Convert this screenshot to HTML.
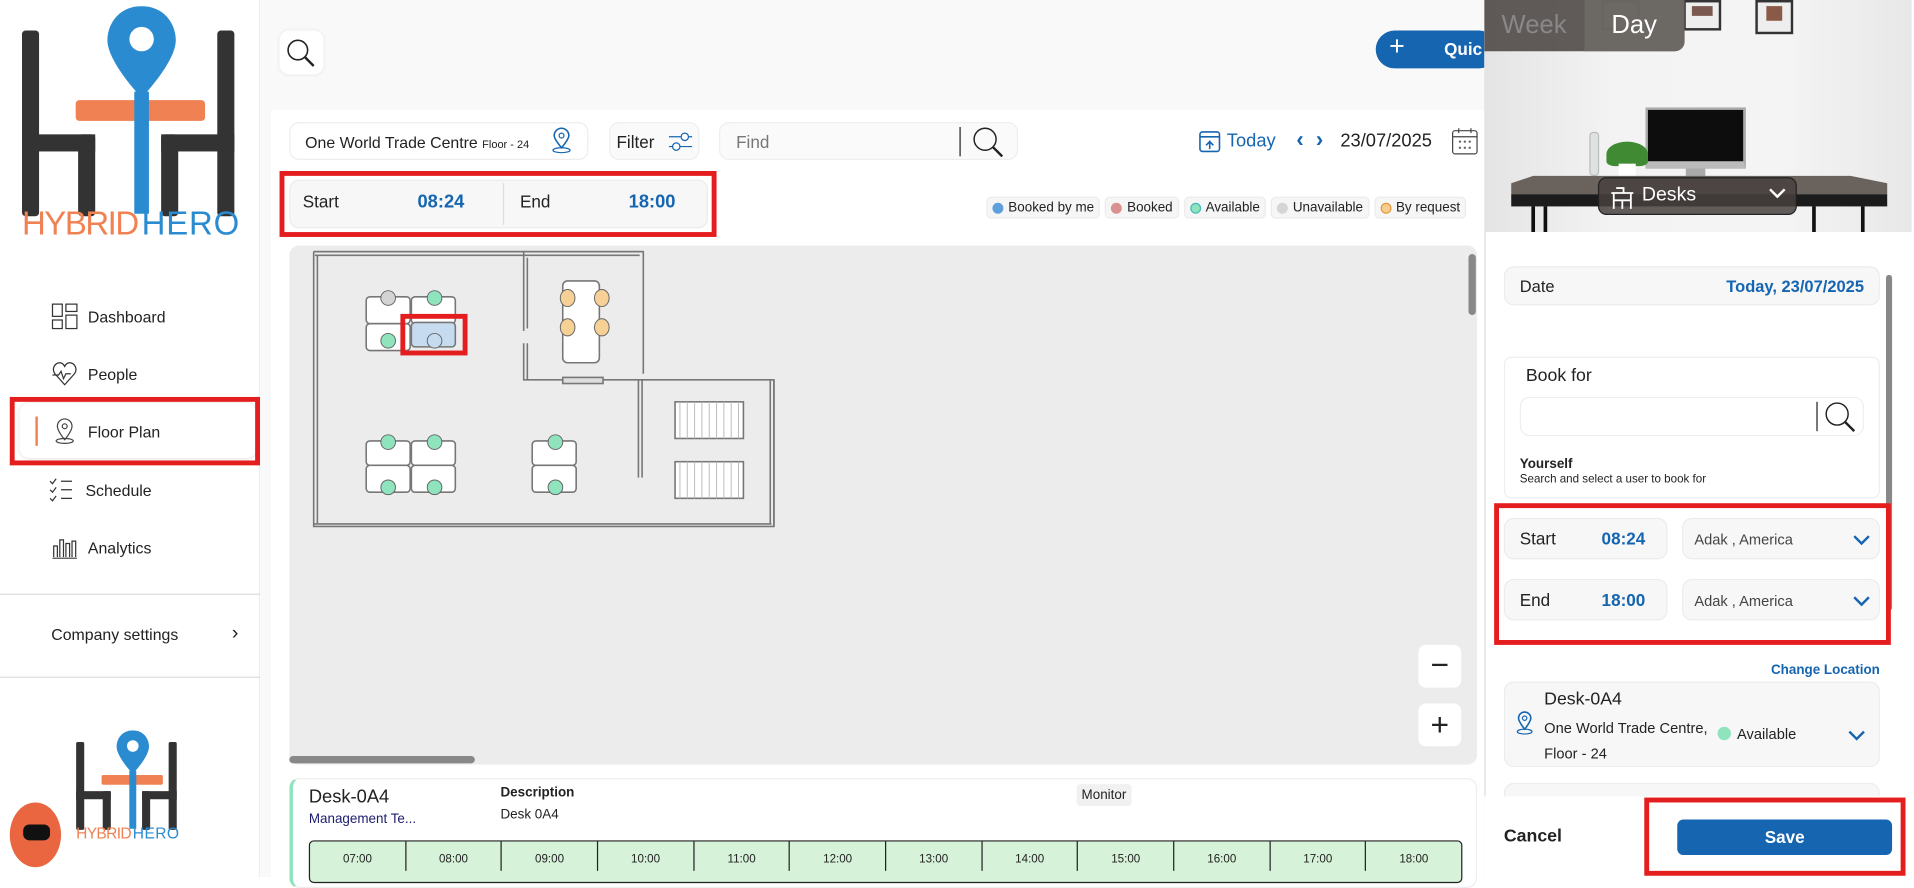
<!DOCTYPE html>
<html><head><meta charset="utf-8"><style>
*{box-sizing:border-box;margin:0;padding:0}
body{width:1914px;height:877px;overflow:hidden;background:#fff;font-family:"Liberation Sans",sans-serif;color:#222}
#w{position:absolute;left:0;top:0;width:1568px;height:718px;transform:scale(1.2207,1.2214);transform-origin:0 0;background:#f9f9f9}
.a{position:absolute}
.red{position:absolute;border:4px solid #e41e1e}
.nav{position:absolute;left:42px;font-size:13px;color:#222;display:flex;align-items:center;gap:8px}
.card{position:absolute;background:#f7f7f7;border:1px solid #ececec;border-radius:8px}
.blue{color:#1565b0;font-weight:bold}
.chip{display:inline-flex;align-items:center;gap:4px;background:#f6f6f6;border:1px solid #ececec;border-radius:4px;padding:2px 4px;font-size:11px;margin-left:4px}
.dot{width:9px;height:9px;border-radius:50%;display:inline-block}
</style></head><body><div id="w">
<!-- sidebar -->
<div class="a" style="left:0;top:0;width:213px;height:718px;background:#fff;border-right:1px solid #eee"></div>
<svg class="a" style="left:18px;top:5px" width="180" height="190" viewBox="0 0 180 190">
<rect x="0" y="20" width="14" height="152" rx="3" fill="#333"/><rect x="0" y="105" width="60" height="14" fill="#333"/><rect x="46" y="105" width="14" height="67" rx="3" fill="#333"/>
<rect x="160" y="20" width="14" height="152" rx="3" fill="#333"/><rect x="114" y="105" width="60" height="14" fill="#333"/><rect x="114" y="105" width="14" height="67" rx="3" fill="#333"/>
<rect x="44" y="77" width="106" height="17" rx="3" fill="#ef8153"/>
<rect x="92" y="70" width="12" height="100" fill="#2b8bd0"/>
<path d="M98 0C80 0 70 14 70 28C70 46 98 75 98 75C98 75 126 46 126 28C126 14 116 0 98 0Z" fill="#2b8bd0"/><circle cx="98" cy="27" r="10" fill="#fff"/>
<text x="0" y="187" font-size="27" font-family="Liberation Sans" fill="#ef8153" textLength="96">HYBRID</text><text x="98" y="187" font-size="27" fill="#2b8bd0" textLength="80">HERO</text>
</svg>
<div class="nav" style="top:248px"><svg width="22" height="22"><rect x="1" y="1" width="8" height="10" fill="none" stroke="#333"/><rect x="12" y="1" width="9" height="6" fill="none" stroke="#333"/><rect x="1" y="14" width="8" height="7" fill="none" stroke="#333"/><rect x="12" y="10" width="9" height="11" fill="none" stroke="#333"/></svg>Dashboard</div>
<div class="nav" style="top:295px"><svg width="22" height="22"><path d="M11 20L3 11C0 7 3 2 7 2C9 2 10 3 11 5C12 3 13 2 15 2C19 2 22 7 19 11Z M1 12H6L8 9L10 15L12 11H16" fill="none" stroke="#333"/></svg>People</div>
<div class="a" style="left:16px;top:330px;width:194px;height:45px;background:#fff;border-radius:8px;box-shadow:0 0 3px #ddd"></div>
<div class="a" style="left:29px;top:341px;width:2px;height:24px;background:#ef8153"></div>
<div class="nav" style="top:342px"><svg width="22" height="22"><path d="M11 18C11 18 5 11 5 7A6 6 0 0 1 17 7C17 11 11 18 11 18Z" fill="none" stroke="#444"/><circle cx="11" cy="7" r="2" fill="none" stroke="#444"/><ellipse cx="11" cy="19" rx="7" ry="2" fill="none" stroke="#444"/></svg>Floor Plan</div>
<div class="red" style="left:8px;top:325px;width:205px;height:56px"></div>
<div class="nav" style="top:390px;left:40px"><svg width="22" height="22"><path d="M1 4l2 2 3-4M1 11l2 2 3-4M1 18l2 2 3-4M10 4h9M10 11h9M10 18h9" fill="none" stroke="#333"/></svg>Schedule</div>
<div class="nav" style="top:437px"><svg width="22" height="22"><path d="M1 20H21M2 19V10H5V19M7 19V5H10V19M12 19V8H15V19M17 19V6H20V19" fill="none" stroke="#333"/></svg>Analytics</div>
<div class="a" style="left:0;top:486px;width:213px;height:1px;background:#ddd"></div>
<div class="a" style="left:42px;top:512px;font-size:13px">Company settings</div>
<div class="a" style="left:190px;top:510px;font-size:16px">›</div>
<div class="a" style="left:0;top:554px;width:213px;height:1px;background:#ddd"></div>
<svg class="a" style="left:60px;top:598px" width="90" height="90" viewBox="0 0 180 190">
<rect x="0" y="20" width="14" height="152" rx="3" fill="#333"/><rect x="0" y="105" width="60" height="14" fill="#333"/><rect x="46" y="105" width="14" height="67" rx="3" fill="#333"/>
<rect x="160" y="20" width="14" height="152" rx="3" fill="#333"/><rect x="114" y="105" width="60" height="14" fill="#333"/><rect x="114" y="105" width="14" height="67" rx="3" fill="#333"/>
<rect x="44" y="77" width="106" height="17" rx="3" fill="#ef8153"/><rect x="92" y="70" width="12" height="100" fill="#2b8bd0"/>
<path d="M98 0C80 0 70 14 70 28C70 46 98 75 98 75C98 75 126 46 126 28C126 14 116 0 98 0Z" fill="#2b8bd0"/><circle cx="98" cy="27" r="10" fill="#fff"/>
<text x="0" y="187" font-size="27" fill="#ef8153" textLength="96">HYBRID</text><text x="98" y="187" font-size="27" fill="#2b8bd0" textLength="80">HERO</text></svg>
<div class="a" style="left:8px;top:657px;width:42px;height:53px;border-radius:50%;background:#e96640"></div>
<div class="a" style="left:19px;top:675px;width:22px;height:13px;border-radius:5px;background:#111"></div>
<!-- top -->
<div class="a" style="left:229px;top:25px;width:36px;height:36px;background:#fff;border-radius:8px;box-shadow:0 0 3px #e4e4e4"></div>
<svg class="a" style="left:234px;top:31px" width="26" height="26"><circle cx="10" cy="10" r="8" fill="none" stroke="#222" stroke-width="1.3"/><path d="M16 16L23 23" stroke="#222" stroke-width="2"/></svg>
<div class="a" style="left:1127px;top:25px;width:100px;height:31px;border-radius:16px;background:#1565b0;color:#fff;font-weight:bold;font-size:14px;padding:7px 0 0 56px">Quic</div>
<div class="a" style="left:1138px;top:25px;color:#fff;font-size:22px">+</div>
<div class="a" style="left:222px;top:90px;width:994px;height:628px;background:#fff"></div>
<div class="a" style="left:237px;top:100px;width:245px;height:31px;border:1px solid #eee;border-radius:8px;font-size:13px;padding:8px 12px;background:#fff">One World Trade Centre <span style="font-size:9px">Floor - 24</span></div>
<svg class="a" style="left:450px;top:104px" width="20" height="22"><path d="M10 17C10 17 4 10 4 7A6 6 0 0 1 16 7C16 10 10 17 10 17Z" fill="none" stroke="#1565b0" stroke-width="1.3"/><circle cx="10" cy="7" r="2" fill="none" stroke="#1565b0"/><ellipse cx="10" cy="19" rx="7" ry="2" fill="none" stroke="#1565b0"/></svg>
<div class="a" style="left:499px;top:100px;width:74px;height:31px;border:1px solid #eee;border-radius:8px;background:#fafafa;font-size:14px;padding:7px 5px">Filter</div>
<svg class="a" style="left:547px;top:106px" width="22" height="20"><path d="M1 6H20M1 14H20" stroke="#1565b0"/><circle cx="14" cy="6" r="3" fill="#fff" stroke="#1565b0"/><circle cx="7" cy="14" r="3" fill="#fff" stroke="#1565b0"/></svg>
<div class="a" style="left:589px;top:100px;width:245px;height:31px;border:1px solid #eee;border-radius:8px;background:#fafafa;font-size:14px;color:#777;padding:7px 13px">Find</div>
<div class="a" style="left:786px;top:104px;width:1px;height:24px;background:#222"></div>
<svg class="a" style="left:795px;top:102px" width="30" height="28"><circle cx="12" cy="12" r="9" fill="none" stroke="#222" stroke-width="1.2"/><path d="M18 18L26 26" stroke="#222" stroke-width="2"/></svg>
<svg class="a" style="left:982px;top:106px" width="18" height="20"><rect x="1" y="2" width="16" height="16" rx="2" fill="none" stroke="#1565b0" stroke-width="1.3"/><path d="M1 6H17M9 9V16M6 13L9 10L12 13" fill="none" stroke="#1565b0" stroke-width="1.3"/></svg>
<div class="a blue" style="left:1005px;top:107px;font-size:15px;font-weight:normal;color:#1565b0">Today</div>
<div class="a" style="left:1062px;top:104px;color:#1565b0;font-size:18px;font-weight:bold">‹&nbsp;&nbsp;›</div>
<div class="a" style="left:1098px;top:107px;font-size:15px">23/07/2025</div>
<svg class="a" style="left:1189px;top:104px" width="22" height="24"><rect x="1" y="3" width="20" height="19" rx="2" fill="none" stroke="#444"/><path d="M1 8H21M6 1V5M16 1V5" stroke="#444"/><g fill="#666"><circle cx="7" cy="12" r="1"/><circle cx="11" cy="12" r="1"/><circle cx="15" cy="12" r="1"/><circle cx="7" cy="17" r="1"/><circle cx="11" cy="17" r="1"/><circle cx="15" cy="17" r="1"/></g></svg>
<div class="card" style="left:237px;top:147px;width:343px;height:40px"></div>
<div class="a" style="left:412px;top:150px;width:1px;height:34px;background:#ddd"></div>
<div class="a" style="left:248px;top:157px;font-size:14px">Start</div><div class="a blue" style="left:342px;top:157px;font-size:15px">08:24</div>
<div class="a" style="left:426px;top:157px;font-size:14px">End</div><div class="a blue" style="left:515px;top:157px;font-size:15px">18:00</div>
<div class="red" style="left:229px;top:140px;width:358px;height:54px"></div>
<div class="a" style="left:804px;top:161px;display:flex">
<span class="chip"><span class="dot" style="background:#5e9fdc"></span>Booked by me</span><span class="chip"><span class="dot" style="background:#d99090"></span>Booked</span><span class="chip"><span class="dot" style="background:#8fe3bd;border:1px solid #4bb"></span>Available</span><span class="chip"><span class="dot" style="background:#d5d5d5"></span>Unavailable</span><span class="chip"><span class="dot" style="background:#f7cd8f;border:1px solid #e79a3a"></span>By request</span></div>
<!-- map -->
<div class="a" style="left:237px;top:201px;width:973px;height:425px;background:#ececec;border-radius:8px"></div>
<div class="a" style="left:1203px;top:208px;width:6px;height:50px;background:#888;border-radius:3px"></div>
<div class="a" style="left:237px;top:619px;width:152px;height:6px;background:#888;border-radius:3px"></div>
<svg class="a" style="left:237px;top:201px" width="973" height="425" fill="none" stroke="#777" stroke-width="1.3">
<path d="M20 5H290V105M192 5V70M192 80V110H290M20 5V230H397V110H287M286 110V190M289 110V190M192 10V68M195 10V68M192 80V110M195 80V110"/>
<path d="M20 5H290M21 8H287M20 228H395M20 5V230M23 8V228M394 110V228M397 110V230"/>
<rect x="224" y="108" width="33" height="5" fill="#ddd"/>
<rect x="316" y="128" width="56" height="30" fill="#fff"/><path d="M320 128V158M326 128V158M332 128V158M338 128V158M344 128V158M350 128V158M356 128V158M362 128V158M368 128V158" stroke="#bbb" stroke-width="0.8"/>
<rect x="316" y="177" width="56" height="30" fill="#fff"/><path d="M320 177V207M326 177V207M332 177V207M338 177V207M344 177V207M350 177V207M356 177V207M362 177V207M368 177V207" stroke="#bbb" stroke-width="0.8"/>
<g fill="#fff"><rect x="63" y="42" width="36" height="22" rx="3"/><rect x="63" y="64" width="36" height="22" rx="3"/><rect x="100" y="42" width="36" height="22" rx="3"/><rect x="100" y="63" width="36" height="20" rx="3" fill="#c6dbf0"/>
<rect x="63" y="160" width="36" height="20" rx="3"/><rect x="63" y="180" width="36" height="22" rx="3"/><rect x="100" y="160" width="36" height="20" rx="3"/><rect x="100" y="180" width="36" height="22" rx="3"/><rect x="199" y="160" width="36" height="20" rx="3"/><rect x="199" y="180" width="36" height="22" rx="3"/>
<rect x="224" y="29" width="30" height="67" rx="4"/></g>
<g stroke="#666" stroke-width="0.8"><circle cx="81" cy="43" r="6" fill="#d3d3d3"/><circle cx="119" cy="43" r="6" fill="#8fe3bd"/><circle cx="81" cy="78" r="6" fill="#8fe3bd"/><circle cx="119" cy="78" r="6" fill="#c6dbf0"/>
<circle cx="81" cy="161" r="6" fill="#8fe3bd"/><circle cx="119" cy="161" r="6" fill="#8fe3bd"/><circle cx="218" cy="161" r="6" fill="#8fe3bd"/><circle cx="81" cy="198" r="6" fill="#8fe3bd"/><circle cx="119" cy="198" r="6" fill="#8fe3bd"/><circle cx="218" cy="198" r="6" fill="#8fe3bd"/>
<ellipse cx="228" cy="43" rx="6" ry="7" fill="#f6d094"/><ellipse cx="256" cy="43" rx="6" ry="7" fill="#f6d094"/><ellipse cx="228" cy="67" rx="6" ry="7" fill="#f6d094"/><ellipse cx="256" cy="67" rx="6" ry="7" fill="#f6d094"/></g>
<rect x="93" y="58" width="51" height="30" stroke="#e41e1e" stroke-width="4"/>
</svg>
<div class="a" style="left:1162px;top:528px;width:35px;height:35px;background:#fff;border-radius:6px;font-size:26px;text-align:center;line-height:32px">−</div>
<div class="a" style="left:1162px;top:576px;width:35px;height:35px;background:#fff;border-radius:6px;font-size:26px;text-align:center;line-height:34px">+</div>
<!-- desk card -->
<div class="a" style="left:237px;top:637px;width:973px;height:90px;background:#fff;border:1px solid #eee;border-left:3px solid #8fe3bd;border-radius:8px"></div>
<div class="a" style="left:253px;top:644px;font-size:15px">Desk-0A4</div>
<div class="a" style="left:253px;top:665px;font-size:11px;color:#1c1c6e">Management Te...</div>
<div class="a" style="left:410px;top:643px;font-size:11px;font-weight:bold">Description</div>
<div class="a" style="left:410px;top:661px;font-size:11px">Desk 0A4</div>
<div class="a" style="left:882px;top:642px;font-size:11px;background:#f1f1f1;padding:3px 4px;border-radius:3px">Monitor</div>
<div class="a" style="left:253px;top:688px;width:945px;height:35px;background:#d6f2d9;border:1px solid #222;border-radius:4px;display:flex;font-size:9.5px">
<div style="flex:1;text-align:center;padding-top:9px;border-right:1px solid #222;height:24px">07:00</div><div style="flex:1;text-align:center;padding-top:9px;border-right:1px solid #222;height:24px">08:00</div><div style="flex:1;text-align:center;padding-top:9px;border-right:1px solid #222;height:24px">09:00</div><div style="flex:1;text-align:center;padding-top:9px;border-right:1px solid #222;height:24px">10:00</div><div style="flex:1;text-align:center;padding-top:9px;border-right:1px solid #222;height:24px">11:00</div><div style="flex:1;text-align:center;padding-top:9px;border-right:1px solid #222;height:24px">12:00</div><div style="flex:1;text-align:center;padding-top:9px;border-right:1px solid #222;height:24px">13:00</div><div style="flex:1;text-align:center;padding-top:9px;border-right:1px solid #222;height:24px">14:00</div><div style="flex:1;text-align:center;padding-top:9px;border-right:1px solid #222;height:24px">15:00</div><div style="flex:1;text-align:center;padding-top:9px;border-right:1px solid #222;height:24px">16:00</div><div style="flex:1;text-align:center;padding-top:9px;border-right:1px solid #222;height:24px">17:00</div><div style="flex:1;text-align:center;padding-top:9px">18:00</div></div>
<!-- right panel -->
<div class="a" style="left:1216px;top:0;width:352px;height:718px;background:#fff;border-left:1px solid #ddd"></div>
<div class="a" style="left:1216px;top:0;width:350px;height:190px;background:linear-gradient(90deg,#e4e4e4,#f3f3f3 30%,#f4f4f4 70%,#e8e8e8);overflow:hidden">
<div class="a" style="left:96px;top:0;width:31px;height:25px;border:2px solid #333;background:#f2f2f2"></div>
<div class="a" style="left:163px;top:0;width:31px;height:25px;border:2px solid #333;background:#eee"><div style="margin:3px 5px;height:8px;background:#7a5a50"></div></div>
<div class="a" style="left:222px;top:0;width:31px;height:28px;border:2px solid #333;background:#eee"><div style="margin:3px 7px;height:12px;background:#8a5a48"></div></div>
<div class="a" style="left:132px;top:88px;width:82px;height:50px;background:#0d0d0d;border:2px solid #aaa;border-bottom:6px solid #bbb"></div>
<div class="a" style="left:165px;top:138px;width:16px;height:9px;background:#aaa"></div>
<div class="a" style="left:86px;top:108px;width:8px;height:36px;background:#dde3e3;border:1px solid #bbb;border-radius:3px"></div>
<div class="a" style="left:100px;top:116px;width:34px;height:20px;background:#3f8a33;border-radius:50% 50% 20% 20%"></div>
<div class="a" style="left:110px;top:134px;width:14px;height:12px;background:#fff"></div>
<svg class="a" style="left:0;top:140px" width="350" height="50"><path d="M40 4H300L330 10V19H22V10Z" fill="#6a625d"/><rect x="22" y="19" width="308" height="10" fill="#1c1c1c"/><path d="M40 29V50M50 29V50M270 29V50M310 29V50" stroke="#111" stroke-width="3"/></svg>
</div>
<div class="a" style="left:1216px;top:0;width:164px;height:42px;background:rgba(70,65,62,.85);border-radius:0 0 8px 0"></div>
<div class="a" style="left:1298px;top:0;width:82px;height:42px;background:rgba(110,105,100,.9);border-radius:0 0 8px 0"></div>
<div class="a" style="left:1230px;top:9px;font-size:21px;color:#888">Week</div>
<div class="a" style="left:1320px;top:9px;font-size:21px;color:#fff">Day</div>
<div class="a" style="left:1309px;top:145px;width:163px;height:31px;background:rgba(70,65,62,.85);border:1px solid #222;border-radius:7px"></div>
<svg class="a" style="left:1318px;top:152px" width="22" height="20"><path d="M2 6H20M4 6V19M18 6V19M4 12H11V19M11 12H18M6 2H12V6" fill="none" stroke="#fff" stroke-width="1.5"/></svg>
<div class="a" style="left:1345px;top:151px;font-size:16px;color:#fff">Desks</div>
<svg class="a" style="left:1448px;top:152px" width="16" height="12"><path d="M2 3L8 9L14 3" fill="none" stroke="#fff" stroke-width="2"/></svg>
<div class="card" style="left:1232px;top:218px;width:308px;height:32px"></div>
<div class="a" style="left:1245px;top:227px;font-size:13.5px">Date</div>
<div class="a blue" style="right:41px;top:227px;font-size:13.5px">Today, 23/07/2025</div>
<div class="a" style="left:1545px;top:225px;width:5px;height:275px;background:#888;border-radius:3px"></div>
<div class="a" style="left:1232px;top:292px;width:308px;height:116px;border:1px solid #eee;border-radius:6px;background:#fff"></div>
<div class="a" style="left:1250px;top:300px;font-size:14.5px">Book for</div>
<div class="a" style="left:1245px;top:325px;width:282px;height:32px;border:1px solid #eee;border-radius:8px"></div>
<div class="a" style="left:1488px;top:329px;width:1px;height:24px;background:#222"></div>
<svg class="a" style="left:1493px;top:327px" width="30" height="28"><circle cx="12" cy="12" r="9" fill="none" stroke="#222" stroke-width="1.2"/><path d="M18 18L26 26" stroke="#222" stroke-width="2"/></svg>
<div class="a" style="left:1245px;top:374px;font-size:11px;font-weight:bold">Yourself</div>
<div class="a" style="left:1245px;top:387px;font-size:9.5px">Search and select a user to book for</div>
<div class="card" style="left:1232px;top:424px;width:134px;height:34px"></div>
<div class="card" style="left:1378px;top:424px;width:162px;height:34px"></div>
<div class="card" style="left:1232px;top:474px;width:134px;height:34px"></div>
<div class="card" style="left:1378px;top:474px;width:162px;height:34px"></div>
<div class="a" style="left:1245px;top:433px;font-size:14px">Start</div><div class="a blue" style="left:1312px;top:433px;font-size:14px">08:24</div>
<div class="a" style="left:1245px;top:483px;font-size:14px">End</div><div class="a blue" style="left:1312px;top:483px;font-size:14px">18:00</div>
<div class="a" style="left:1388px;top:435px;font-size:12px;color:#444">Adak , America</div>
<div class="a" style="left:1388px;top:485px;font-size:12px;color:#444">Adak , America</div>
<svg class="a" style="left:1517px;top:436px" width="16" height="12"><path d="M2 3L8 9L14 3" fill="none" stroke="#1565b0" stroke-width="2"/></svg>
<svg class="a" style="left:1517px;top:486px" width="16" height="12"><path d="M2 3L8 9L14 3" fill="none" stroke="#1565b0" stroke-width="2"/></svg>
<div class="red" style="left:1224px;top:412px;width:325px;height:116px"></div>
<div class="a blue" style="right:28px;top:543px;font-size:11px">Change Location</div>
<div class="card" style="left:1232px;top:558px;width:308px;height:70px"></div>
<svg class="a" style="left:1240px;top:582px" width="18" height="22"><path d="M9 15C9 15 4 9 4 6A5 5 0 0 1 14 6C14 9 9 15 9 15Z" fill="none" stroke="#1565b0" stroke-width="1.3"/><circle cx="9" cy="6" r="1.8" fill="none" stroke="#1565b0"/><ellipse cx="9" cy="17" rx="6" ry="2" fill="none" stroke="#1565b0"/></svg>
<div class="a" style="left:1265px;top:565px;font-size:14.5px">Desk-0A4</div>
<div class="a" style="left:1265px;top:586px;font-size:12px;line-height:21px">One World Trade Centre,<br>Floor - 24</div>
<div class="a" style="left:1407px;top:595px;width:11px;height:11px;border-radius:50%;background:#8fe3bd"></div>
<div class="a" style="left:1423px;top:594px;font-size:12px">Available</div>
<svg class="a" style="left:1513px;top:596px" width="16" height="12"><path d="M2 3L8 9L14 3" fill="none" stroke="#1565b0" stroke-width="2"/></svg>
<div class="card" style="left:1232px;top:641px;width:308px;height:12px;border-bottom:none;border-radius:8px 8px 0 0"></div>
<div class="a" style="left:1216px;top:652px;width:350px;height:66px;background:#fff"></div>
<div class="a" style="left:1232px;top:677px;font-size:14.5px;font-weight:bold">Cancel</div>
<div class="a" style="left:1374px;top:671px;width:176px;height:29px;background:#1565b0;border-radius:5px;color:#fff;font-weight:bold;font-size:14px;text-align:center;line-height:29px">Save</div>
<div class="red" style="left:1347px;top:653px;width:214px;height:64px"></div>
</div></body></html>
